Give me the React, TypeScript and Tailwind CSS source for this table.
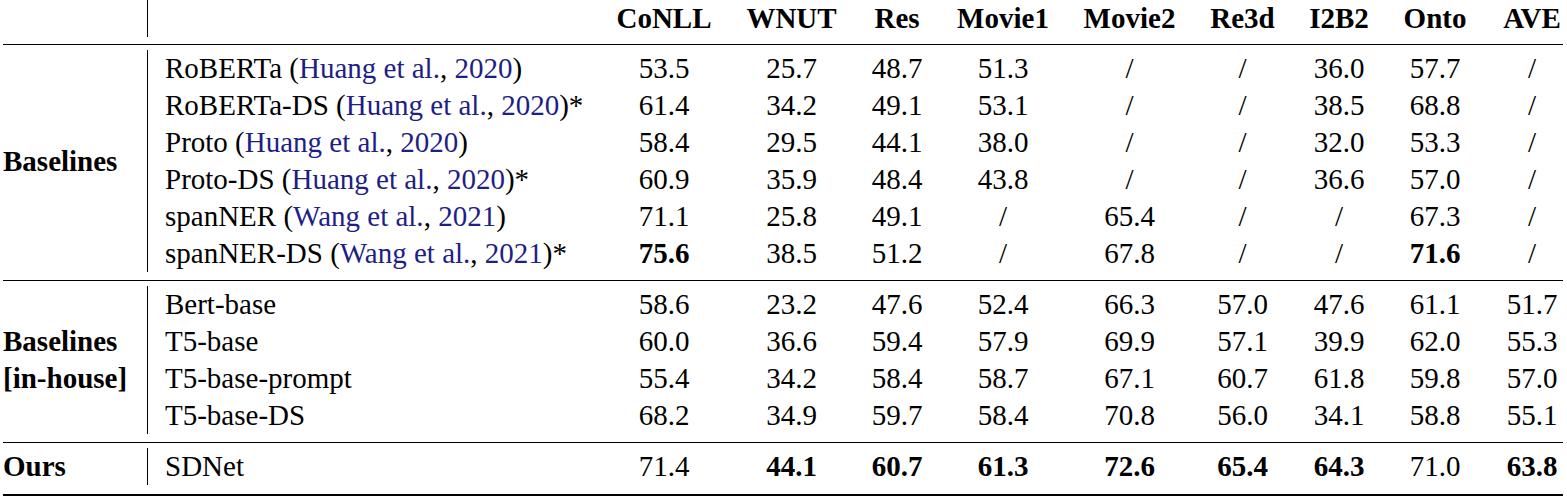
type Cell = string | { v: string; b: true };

type Row = { model: string; cite?: string; star?: boolean; cells: Cell[] };

const cols = ["CoNLL", "WNUT", "Res", "Movie1", "Movie2", "Re3d", "I2B2", "Onto", "AVE"];

const grid =
  "grid grid-cols-[144px_452px_130px_125px_86px_126px_127px_99px_94px_98px_79px] auto-rows-[37px] leading-[37px]";

const bold = (v: string): Cell => ({ v, b: true });

const groups: { label: string[]; rows: Row[]; last?: boolean }[] = [
  {
    label: ["Baselines"],
    rows: [
      { model: "RoBERTa", cite: "Huang et al., 2020", cells: ["53.5", "25.7", "48.7", "51.3", "/", "/", "36.0", "57.7", "/"] },
      { model: "RoBERTa-DS", cite: "Huang et al., 2020", star: true, cells: ["61.4", "34.2", "49.1", "53.1", "/", "/", "38.5", "68.8", "/"] },
      { model: "Proto", cite: "Huang et al., 2020", cells: ["58.4", "29.5", "44.1", "38.0", "/", "/", "32.0", "53.3", "/"] },
      { model: "Proto-DS", cite: "Huang et al., 2020", star: true, cells: ["60.9", "35.9", "48.4", "43.8", "/", "/", "36.6", "57.0", "/"] },
      { model: "spanNER", cite: "Wang et al., 2021", cells: ["71.1", "25.8", "49.1", "/", "65.4", "/", "/", "67.3", "/"] },
      { model: "spanNER-DS", cite: "Wang et al., 2021", star: true, cells: [bold("75.6"), "38.5", "51.2", "/", "67.8", "/", "/", bold("71.6"), "/"] },
    ],
  },
  {
    label: ["Baselines", "[in-house]"],
    rows: [
      { model: "Bert-base", cells: ["58.6", "23.2", "47.6", "52.4", "66.3", "57.0", "47.6", "61.1", "51.7"] },
      { model: "T5-base", cells: ["60.0", "36.6", "59.4", "57.9", "69.9", "57.1", "39.9", "62.0", "55.3"] },
      { model: "T5-base-prompt", cells: ["55.4", "34.2", "58.4", "58.7", "67.1", "60.7", "61.8", "59.8", "57.0"] },
      { model: "T5-base-DS", cells: ["68.2", "34.9", "59.7", "58.4", "70.8", "56.0", "34.1", "58.8", "55.1"] },
    ],
  },
  {
    label: ["Ours"],
    last: true,
    rows: [
      {
        model: "SDNet",
        cells: ["71.4", bold("44.1"), bold("60.7"), bold("61.3"), bold("72.6"), bold("65.4"), bold("64.3"), "71.0", bold("63.8")],
      },
    ],
  },
];

function NumCell({ c, i }: { c: Cell; i: number }) {
  const isBold = typeof c !== "string";
  const text = typeof c === "string" ? c : c.v;
  return (
    <div className={`text-center ${i === 8 ? "pl-[17px]" : ""} ${isBold ? "font-bold" : ""}`}>{text}</div>
  );
}

export default function App() {
  return (
    <div className="bg-white min-h-screen text-black font-['Liberation_Serif','Times_New_Roman',serif]">
      <div className="ml-[3px] w-[1560px] text-[29px]">
        {/* Header */}
        <div className={`${grid} pb-[7px] border-b border-black`}>
          <div />
          <div className="border-l border-black" />
          {cols.map((c, i) => (
            <div key={c} className={`text-center font-bold ${i === 8 ? "pl-[17px]" : ""}`}>
              {c}
            </div>
          ))}
        </div>

        {groups.map((g) => (
          <div
            key={g.rows[0].model}
            className={`${grid} pt-[5px] ${g.last ? "pb-[9px] border-b-2" : "pb-[8px] border-b"} border-black`}
          >
            <div
              className={`font-bold flex flex-col justify-center whitespace-nowrap ${
                g.rows.length === 6 ? "row-span-6" : g.rows.length === 4 ? "row-span-4" : "row-span-1"
              }`}
            >
              {g.label.map((l) => (
                <span key={l}>{l}</span>
              ))}
            </div>
            {g.rows.map((r) => (
              <div key={r.model} className="contents">
                <div className="border-l border-black pl-[17px] whitespace-nowrap">
                  {r.model}
                  {r.cite && (
                    <>
                      {" ("}
                      <span className="text-[#1e1e86]">{r.cite.replace(/, \d{4}$/, "")}</span>
                      {", "}
                      <span className="text-[#1e1e86]">{r.cite.slice(-4)}</span>
                      {")"}
                      {r.star && "*"}
                    </>
                  )}
                </div>
                {r.cells.map((c, i) => (
                  <NumCell key={i} c={c} i={i} />
                ))}
              </div>
            ))}
          </div>
        ))}
      </div>
    </div>
  );
}
